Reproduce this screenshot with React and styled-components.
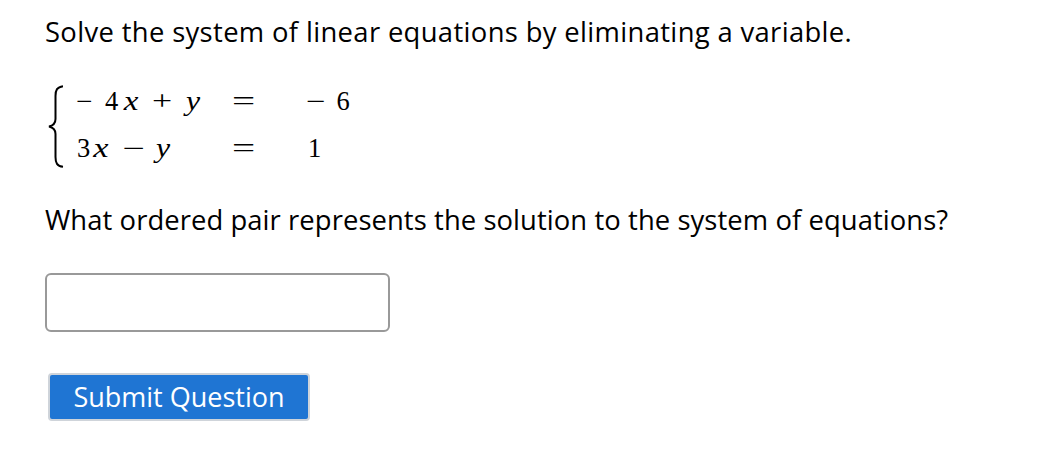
import React from "react";
import styled, { createGlobalStyle } from "styled-components";

const Global = createGlobalStyle`
  html, body { margin: 0; padding: 0; background: #fff; }
  body { font-family: "Open Sans", "DejaVu Sans", sans-serif; color: #000; }
`;

const Page = styled.div`
  padding: 14px 0 0 45px;
  display: flex;
  flex-direction: column;
  align-items: flex-start;
`;

const Text = styled.p`
  margin: 0;
  font-size: 27.4px;
  line-height: 36px;
  letter-spacing: ${(p) => p.$ls || 0}px;
`;

const MathBlock = styled.div`
  display: flex;
  align-items: flex-start;
  margin: 28px 0 0 2px;
  font-family: "Liberation Serif", "DejaVu Serif", serif;
  font-size: 26.5px;
`;

const Brace = styled.svg`
  width: 18px;
  height: 83px;
  margin: 7px 12px 0 0;
  flex: none;
`;

const Grid = styled.div`
  display: grid;
  grid-template-columns: 155px 75px auto;
  grid-auto-rows: 47px;
  line-height: 47px;
`;

const Cell = styled.span`
  display: flex;
  white-space: pre;
`;

const Sym = styled.span`
  display: inline-block;
  width: ${(p) => p.$w}px;
  margin-left: ${(p) => p.$ml || 0}px;
  text-align: center;
  font-style: ${(p) => (p.$it ? "italic" : "normal")};
  transform: scaleX(${(p) => p.$sx || 1});
`;

const Question = styled(Text)`
  margin-top: 30px;
`;

const Input = styled.input`
  margin-top: 35px;
  width: 345px;
  height: 59px;
  box-sizing: border-box;
  border: 2px solid #999;
  border-radius: 6px;
  background: #fff;
`;

const Button = styled.button`
  margin: 41px 0 0 3px;
  width: 262px;
  height: 48px;
  box-sizing: border-box;
  background: #1f75d3;
  color: #fff;
  border: 2px solid #cfd4da;
  border-radius: 4px;
  font-family: "Open Sans", "DejaVu Sans", sans-serif;
  font-size: 27px;
  line-height: 44px;
  padding: 0 0 2px;
`;

export default function App() {
  return (
    <>
      <Global />
      <Page>
        <Text $ls={0.35}>Solve the system of linear equations by eliminating a variable.</Text>
        <MathBlock>
          <Brace viewBox="0 0 18 83">
            <path
              d="M16 1.2 C10 2 8.5 5 8.5 11 L8.5 34 C8.5 38.5 6.5 40.5 2 41.5 C6.5 42.5 8.5 44.5 8.5 49 L8.5 72 C8.5 78 10 81 16 81.8"
              fill="none"
              stroke="#000"
              strokeWidth="2"
            />
          </Brace>
          <Grid>
            <Cell>
              <Sym $w={13} $sx={1.1}>−</Sym>
              <Sym $w={13} $ml={15}>4</Sym>
              <Sym $w={18} $ml={4} $it $sx={1.25}>x</Sym>
              <Sym $w={20} $ml={12} $sx={1.35}>+</Sym>
              <Sym $w={20} $ml={11} $it $sx={1.2}>y</Sym>
            </Cell>
            <Cell>
              <Sym $w={23} $sx={1.55}>=</Sym>
            </Cell>
            <Cell>
              <Sym $w={18} $sx={1.3}>−</Sym>
              <Sym $w={20} $ml={8}>6</Sym>
            </Cell>
            <Cell>
              <Sym $w={13}>3</Sym>
              <Sym $w={22} $it $sx={1.3}>x</Sym>
              <Sym $w={22} $ml={11} $sx={1.5}>−</Sym>
              <Sym $w={20} $ml={8} $it $sx={1.2}>y</Sym>
            </Cell>
            <Cell>
              <Sym $w={23} $sx={1.55}>=</Sym>
            </Cell>
            <Cell>
              <Sym $w={12} $ml={1}>1</Sym>
            </Cell>
          </Grid>
        </MathBlock>
        <Question $ls={0.08}>What ordered pair represents the solution to the system of equations?</Question>
        <Input type="text" />
        <Button>Submit Question</Button>
      </Page>
    </>
  );
}
